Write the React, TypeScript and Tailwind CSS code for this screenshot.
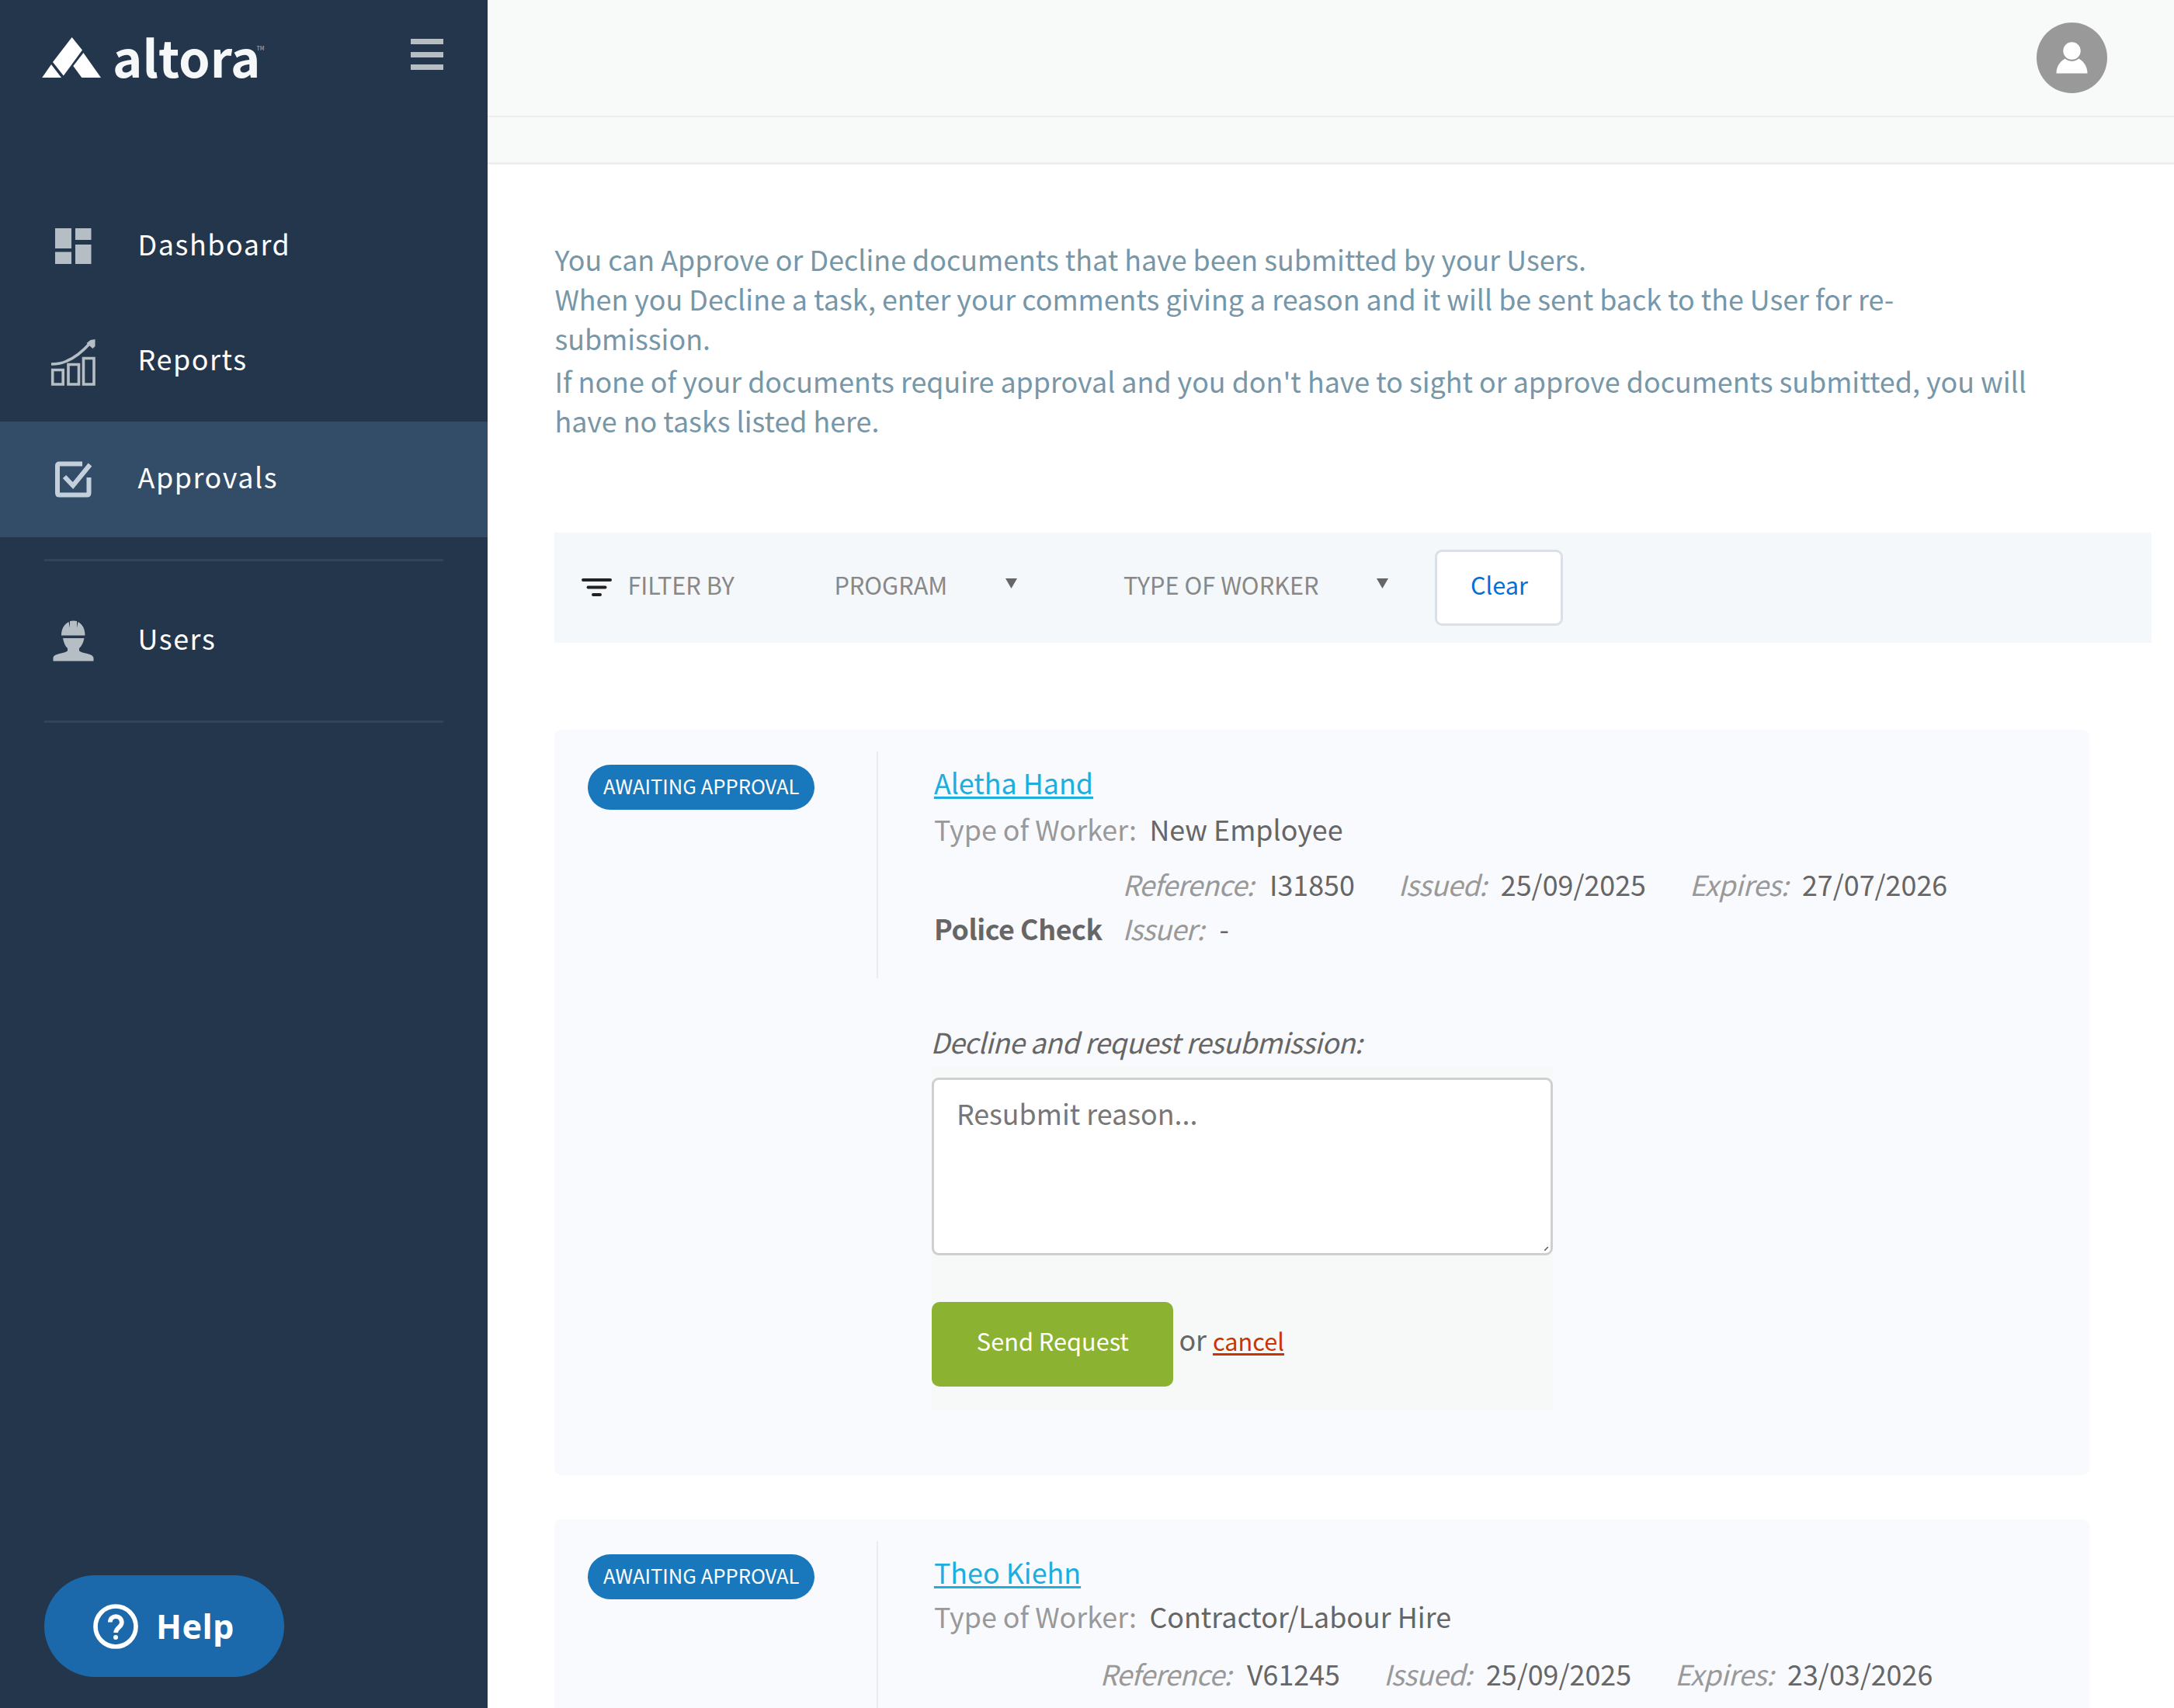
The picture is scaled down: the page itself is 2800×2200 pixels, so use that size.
import React from "react";

const FONT = "font-['Noto_Sans_CJK_SC','Noto_Sans',sans-serif]";

function Logo() {
  return (
    <div className="flex h-[52px]">
      <svg className="h-[52px] w-[76px]" viewBox="54 48 76 52" fill="#fff">
        <path d="M92.6 48 L106 64.5 L81.8 97.5 L68 80 Z" />
        <path d="M66 83 L79 100 H54.2 Z" />
        <path d="M107.4 68 L130 100 H105.3 L94.3 85 Z" />
      </svg>
      <div className="-mt-[2px] ml-[15px] text-[65px] leading-[52px] font-bold text-[#f6f7f8]">altora</div>
      <div className="mt-[10px] -ml-[5px] text-[7px] leading-[9px] text-[#b6bdc3]">TM</div>
    </div>
  );
}

function DashboardIcon() {
  return (
    <svg className="h-[64px] w-[64px]" viewBox="62 285 64 64" fill="#b6bec5">
      <path d="M71 294h21v26h-21zM71 324.5h21V340h-21zM97 294h20.500v15H97zM97 315h20.500v25H97z" />
    </svg>
  );
}

function ReportsIcon() {
  return (
    <svg className="h-[64px] w-[64px]" viewBox="62 435 64 64" fill="none" stroke="#b6bec5" strokeWidth="3.600">
      <path d="M67.700 476.500h13.500v18.500H67.700zM88 469.500h13.500V495H88zM107.500 461.500h13.500V495h-13.500z" />
      <path d="M66 469c8 0 14-1 20-4c12-5 21-13 30-23" />
      <path d="M122.500 437v9l-3 3-8-7 5-4z" fill="#b6bec5" stroke="none" />
    </svg>
  );
}

function ApprovalsIcon() {
  return (
    <svg className="h-[64px] w-[64px]" viewBox="62 585.5 64 64" fill="none" stroke="#c3d0dc" strokeWidth="6">
      <path d="M106 597H76.500q-2.500 0-2.500 2.500v35q0 2.500 2.500 2.500h35.500q2.500 0 2.500-2.500v-20" />
      <path d="M83 613.500l11 11.500 22-27" />
    </svg>
  );
}

function UsersIcon() {
  return (
    <svg className="h-[64px] w-[64px]" viewBox="62 794.5 64 64" fill="#b6bec5">
      <path d="M79 819c0-9 4-14.500 9.500-17.500l1.500 8v-9q4.500-1 9 0v9l1.500-8c5.500 3 9 8.500 9 17.500z" />
      <path d="M81 822.500h27.500c-1 5-3 10-6.500 13v3c2 4 18 3 18.500 9.500v4H68.500v-4c.5-6.500 16.500-5.500 18.500-9.500v-3c-3.500-3-5-8-6-13z" />
    </svg>
  );
}

type NavItemProps = { icon: React.ReactNode; label: string; className: string; labelClass: string };

function NavItem({ icon, label, className, labelClass }: NavItemProps) {
  return (
    <div className={`flex items-center pl-[62px] text-white ${className}`}>
      {icon}
      <span className={`ml-[51.5px] text-[35.83px] leading-[52px] tracking-[1.6px] ${labelClass}`}>{label}</span>
    </div>
  );
}

function Sidebar() {
  return (
    <aside className="flex h-[2200px] w-[628.4px] shrink-0 flex-col bg-[#24364b]">
      <div className="flex justify-between pt-12 pr-[57px] pl-[54px]">
        <Logo />
        <div className="mt-[2px] flex h-10 w-[42px] flex-col justify-between">
          <div className="h-[7px] bg-[#b6bdc3]" />
          <div className="h-[7px] bg-[#b6bdc3]" />
          <div className="h-[7px] bg-[#b6bdc3]" />
        </div>
      </div>
      <NavItem icon={<DashboardIcon />} label="Dashboard" className="mt-[143px] h-[148px]" labelClass="mb-[8px]" />
      <NavItem icon={<ReportsIcon />} label="Reports" className="h-[152px]" labelClass="mb-[12px]" />
      <NavItem icon={<ApprovalsIcon />} label="Approvals" className="h-[149px] bg-[#334d68]" labelClass="mb-[10px]" />
      <div className="mx-[57px] mt-7 h-[3px] bg-[#31445a]" />
      <NavItem icon={<UsersIcon />} label="Users" className="h-[205px]" labelClass="mb-[10px]" />
      <div className="mx-[57px] h-[3px] bg-[#31445a]" />
      <div className="mt-auto mb-10 ml-[57px] flex h-[131px] w-[309px] items-center rounded-full bg-[#1b69ab] pl-[63px] text-white">
        <svg className="h-[58px] w-[58px]" viewBox="0 0 58 58" fill="none" stroke="#fff">
          <circle cx="29" cy="29" r="26" strokeWidth="5.700" />
          <path d="M21.800 23.500c0-10 15-10 15 .5 0 6-7.600 6.500-7.600 13" strokeWidth="5.700" />
          <circle cx="29" cy="43" r="3" fill="#fff" stroke="none" />
        </svg>
        <span className="ml-[23px] font-['Noto_Sans',sans-serif] text-[43px] leading-[56px] font-bold tracking-[0.6px]">Help</span>
      </div>
    </aside>
  );
}

function Header() {
  return (
    <header className="bg-[#f8faf9]">
      <div className="flex h-[151px] items-start justify-end border-b-2 border-[#eeeeee] pt-[29px] pr-[86px]">
        <svg className="h-[91px] w-[91px]" viewBox="0 0 91 91">
          <circle cx="45.500" cy="45.500" r="45.500" fill="#999" />
          <path d="M36.500 46.500q9 6 18 0c7 4 11 11 11 19h-40c0-8 4-15 11-19z" fill="#fff" />
          <circle cx="45.500" cy="36.500" r="12.200" fill="#fff" stroke="#999" strokeWidth="2" />
        </svg>
      </div>
      <div className="h-[60.500px] border-b-[3px] border-[#eeeeee]" />
    </header>
  );
}

function Intro() {
  return (
    <div className="mt-[96px] text-[35.83px] leading-[51px] text-[#7797a8]">
      <p>You can Approve or Decline documents that have been submitted by your Users.</p>
      <p>When you Decline a task, enter your comments giving a reason and it will be sent back to the User for re-</p>
      <p>submission.</p>
      <p className="mt-1">If none of your documents require approval and you don't have to sight or approve documents submitted, you will</p>
      <p>have no tasks listed here.</p>
    </div>
  );
}

function Caret() {
  return (
    <svg className="mb-[11px] h-[13px] w-[15px]" viewBox="0 0 15 13">
      <path d="M0 0h15L7.500 13z" fill="#666" />
    </svg>
  );
}

function FilterBar() {
  return (
    <div className="mt-[119.5px] flex h-[142px] w-[2057px] items-center bg-[#f4f8fb] text-[30.71px] leading-[44px] text-[#888]">
      <svg className="mb-[2px] ml-[35px] h-[24px] w-[39px]" viewBox="0 0 39 24" stroke="#222" strokeWidth="4" strokeLinecap="round">
        <path d="M2 3h35M8.500 12.500h22M15 22h9" />
      </svg>
      <div className="mb-[8px] w-[286px] pl-[20px]">FILTER BY</div>
      <div className="mb-[8px] w-[220.5px]">PROGRAM</div>
      <Caret />
      <div className="mb-[8px] w-[463.5px] pl-[137px]">TYPE OF WORKER</div>
      <Caret />
      <div className="ml-[60px] h-[98px] w-[165px] rounded-[9px] border-[3px] border-[#dadfe8] bg-white text-center leading-[84px] text-[#0070d8]">
        Clear
      </div>
    </div>
  );
}

type Task = { name: string; type: string; reference: string; issued: string; expires: string };

function Badge() {
  return (
    <div className="mt-[17.4px] ml-[43px] h-[57.5px] w-[291.500px] rounded-full bg-[#1978bb] text-center text-[25.6px] leading-[54px] text-white">
      AWAITING APPROVAL
    </div>
  );
}

function Field({ label, value, labelClass }: { label: string; value: string; labelClass: string }) {
  return (
    <div className="flex">
      <span className={`italic text-[#999] ${labelClass}`}>{label}</span>
      <span>{value}</span>
    </div>
  );
}

function Fields({ task }: { task: Task }) {
  return (
    <div className="flex gap-[56px]">
      <Field label="Reference:" value={task.reference} labelClass="w-[189.5px] tracking-[-0.64px]" />
      <Field label="Issued:" value={task.issued} labelClass="w-[132px] tracking-[-0.57px]" />
      <Field label="Expires:" value={task.expires} labelClass="w-[145px] tracking-[-0.3px]" />
    </div>
  );
}

function CardHead({ task, typeClass }: { task: Task; typeClass: string }) {
  return (
    <>
      <div>
        <a className="text-[#1eaddc] underline decoration-[3px] underline-offset-[3px]">{task.name}</a>
      </div>
      <div className={`flex ${typeClass}`}>
        <span className="w-[277.5px] text-[#999]">Type of Worker:</span>
        <span>{task.type}</span>
      </div>
    </>
  );
}

function CardTop({ children }: { children: React.ReactNode }) {
  return (
    <div className="flex h-[292px]">
      <div className="w-[415px]">
        <Badge />
      </div>
      <div className="w-[2px] bg-[#ebecf1]" />
      <div className="pt-[13px] pl-[71.5px] text-[35.83px] leading-[52px] text-[#666]">{children}</div>
    </div>
  );
}

function ResubmitForm() {
  return (
    <div className="mt-[55px] ml-[486px] w-[800px]">
      <div className="-ml-[2px] text-[35.83px] leading-[52px] tracking-[-0.53px] text-[#666] italic">Decline and request resubmission:</div>
      <div className="mt-[7px] h-[441px] bg-[#f7f9f8] pt-[14px]">
        <div className="flex h-[229px] items-end justify-between rounded-[9px] border-[3px] border-[#cfcfcf] bg-white pr-[3px] pb-[3px] pl-[28.5px]">
          <div className="mt-[16px] self-start text-[35.83px] leading-[52px] text-[#777]">Resubmit reason...</div>
          <svg className="h-[5px] w-[5px]" viewBox="0 0 5 5" stroke="#555" strokeWidth="1.500">
            <path d="M0 5L5 0" />
          </svg>
        </div>
        <div className="mt-[60px] flex items-baseline leading-[44px]">
          <button className="h-[109px] w-[311px] rounded-[10px] bg-[#8bb230] pb-[10px] text-[30.71px] text-white">Send Request</button>
          <span className="ml-[7px] text-[35.83px] text-[#666]">or</span>
          <a className="ml-[8px] text-[30.71px] text-[#cc3300] underline decoration-[3px] underline-offset-[3px]">cancel</a>
        </div>
      </div>
    </div>
  );
}

const aletha: Task = { name: "Aletha Hand", type: "New Employee", reference: "I31850", issued: "25/09/2025", expires: "27/07/2026" };
const theo: Task = { name: "Theo Kiehn", type: "Contractor/Labour Hire", reference: "V61245", issued: "25/09/2025", expires: "23/03/2026" };

export default function App() {
  return (
    <div className={`flex h-[2200px] w-[2800px] overflow-hidden bg-white ${FONT}`}>
      <Sidebar />
      <div className="min-w-0 flex-1">
        <Header />
        <main className="pl-[86px] whitespace-nowrap">
          <Intro />
          <FilterBar />
          <section className="mt-[112px] h-[960px] w-[1977px] rounded-[9px] bg-[#f9fafe] pt-[28px]">
            <CardTop>
              <CardHead task={aletha} typeClass="mt-[8px]" />
              <div className="mt-[19px] flex items-end">
                <span className="w-[242.5px] font-bold tracking-[-0.45px]">Police Check</span>
                <div>
                  <Fields task={aletha} />
                  <div className="mt-[5px]">
                    <Field label="Issuer:" value="-" labelClass="w-[125px] tracking-[-0.75px]" />
                  </div>
                </div>
              </div>
            </CardTop>
            <ResubmitForm />
          </section>
          <section className="mt-[57px] h-[960px] w-[1977px] rounded-[9px] bg-[#f9fafe] pt-[28px]">
            <CardTop>
              <CardHead task={theo} typeClass="mt-[5px]" />
              <div className="mt-[22px] ml-[213.5px]">
                <Fields task={theo} />
              </div>
            </CardTop>
          </section>
        </main>
      </div>
    </div>
  );
}
